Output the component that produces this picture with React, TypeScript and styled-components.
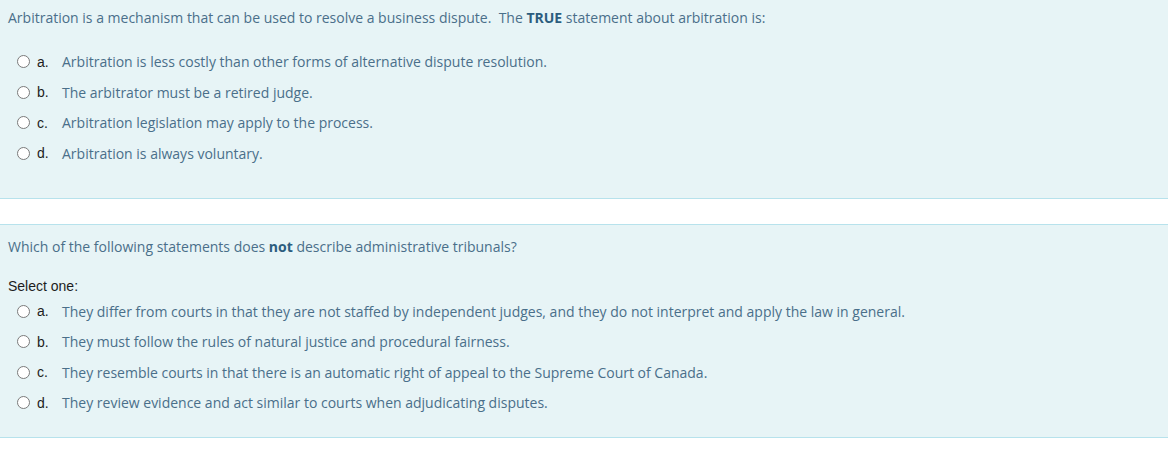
import React from "react";
import styled, { createGlobalStyle } from "styled-components";

const Global = createGlobalStyle`
  html, body { margin: 0; padding: 0; background: #ffffff; }
  body { font-family: "Open Sans", "Liberation Sans", sans-serif; }
`;

const Page = styled.div`
  display: flex;
  flex-direction: column;
  gap: 25px;
  margin-top: -6px;
`;

const Card = styled.div<{ $padTop: number; $padBottom: number }>`
  background: #e7f4f6;
  border-top: 1px solid #b7e2ec;
  border-bottom: 1px solid #b7e2ec;
  padding: ${(p) => p.$padTop}px 8px ${(p) => p.$padBottom}px 8px;
  display: flex;
  flex-direction: column;
`;

const QText = styled.div<{ $gap: number }>`
  font-family: "Open Sans", sans-serif;
  font-size: 14px;
  line-height: 19px;
  color: #4a6f8a;
  margin-bottom: ${(p) => p.$gap}px;
  b { color: #2c5d7e; font-weight: 700; }
`;

const Prompt = styled.div`
  font-family: "Liberation Sans", Arial, sans-serif;
  font-size: 14px;
  line-height: 18px;
  color: #1d1d1d;
  margin-bottom: 7px;
`;

const Options = styled.div`
  display: flex;
  flex-direction: column;
  gap: 11.5px;
`;

const Row = styled.label`
  display: flex;
  align-items: center;
  height: 19px;
  padding-left: 9px;
`;

const Radio = styled.span`
  width: 11px;
  height: 11px;
  border: 1px solid #7a7a7a;
  border-radius: 50%;
  background: #ffffff;
  flex: none;
`;

const Letter = styled.span`
  font-family: "Liberation Sans", Arial, sans-serif;
  font-size: 14px;
  color: #1d1d1d;
  margin-left: 7px;
  width: 25px;
`;

const OptText = styled.span`
  font-family: "Open Sans", sans-serif;
  font-size: 14px;
  color: #4a6f8a;
`;

const q1 = [
  "Arbitration is less costly than other forms of alternative dispute resolution.",
  "The arbitrator must be a retired judge.",
  "Arbitration legislation may apply to the process.",
  "Arbitration is always voluntary.",
];

const q2 = [
  "They differ from courts in that they are not staffed by independent judges, and they do not interpret and apply the law in general.",
  "They must follow the rules of natural justice and procedural fairness.",
  "They resemble courts in that there is an automatic right of appeal to the Supreme Court of Canada.",
  "They review evidence and act similar to courts when adjudicating disputes.",
];

const letters = ["a.", "b.", "c.", "d."];

function OptionList({ items }: { items: string[] }) {
  return (
    <Options>
      {items.map((t, i) => (
        <Row key={i}>
          <Radio />
          <Letter>{letters[i]}</Letter>
          <OptText>{t}</OptText>
        </Row>
      ))}
    </Options>
  );
}

export default function App() {
  return (
    <>
      <Global />
      <Page>
        <Card $padTop={13} $padBottom={35}>
          <QText $gap={25}>
            Arbitration is a mechanism that can be used to resolve a business dispute.&nbsp; The <b>TRUE</b> statement about arbitration is:
          </QText>
          <OptionList items={q1} />
        </Card>
        <Card $padTop={12} $padBottom={25}>
          <QText $gap={21}>
            Which of the following statements does <b>not</b> describe administrative tribunals?
          </QText>
          <Prompt>Select one:</Prompt>
          <OptionList items={q2} />
        </Card>
      </Page>
    </>
  );
}
